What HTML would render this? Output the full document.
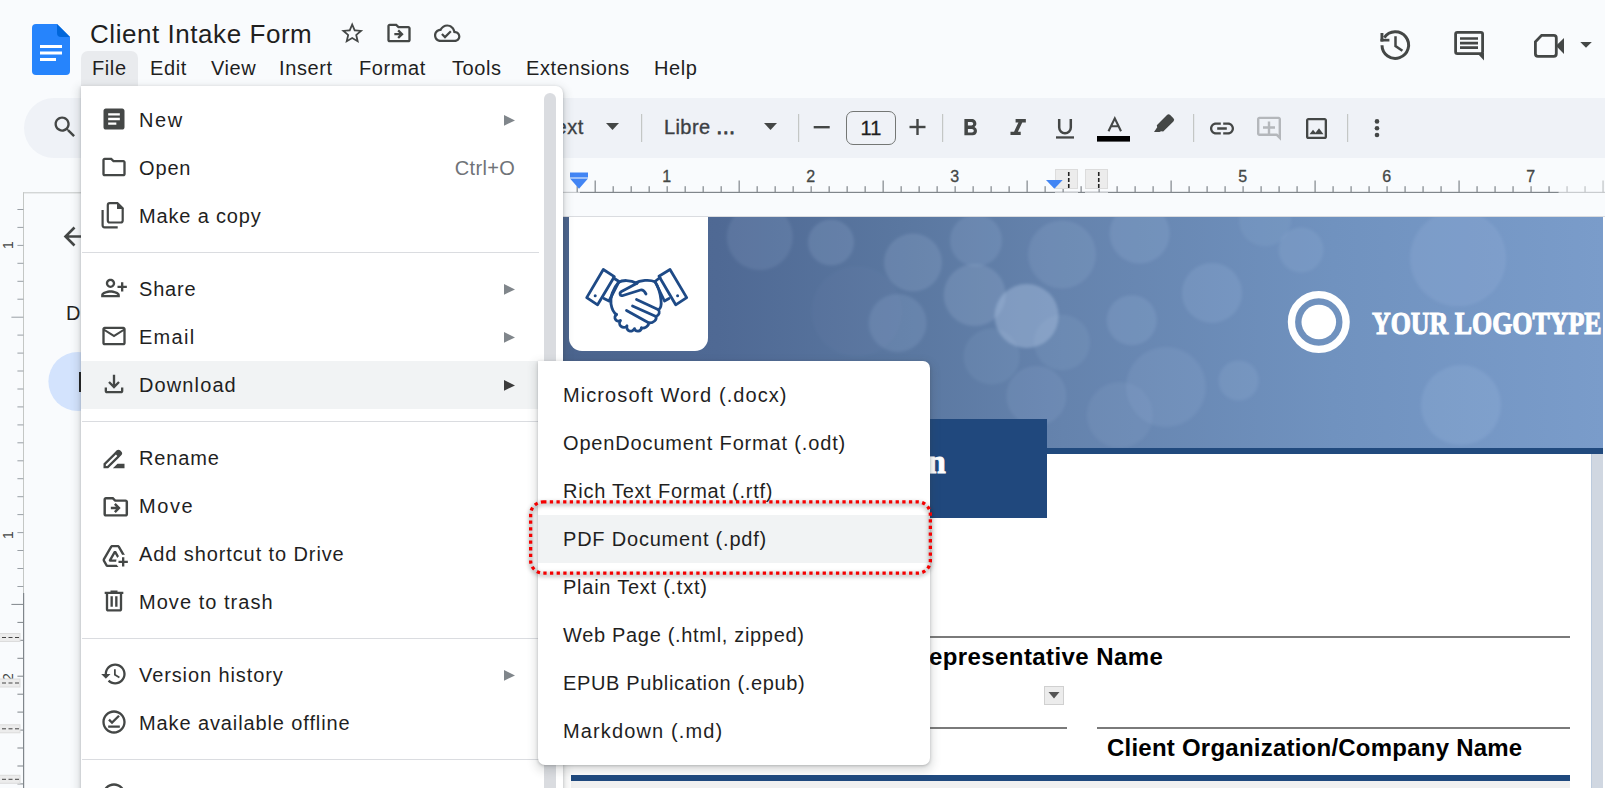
<!DOCTYPE html>
<html><head><meta charset="utf-8">
<style>
*{margin:0;padding:0;box-sizing:border-box}
html,body{width:1605px;height:788px;overflow:hidden;background:#f9fbfd;font-family:"Liberation Sans",sans-serif;color:#1f1f1f}
.a{position:absolute}
.t{position:absolute;white-space:nowrap;line-height:1}
svg{position:absolute;overflow:visible}
.ic{fill:#444746}
.mb{font-size:20px;letter-spacing:0.6px;color:#1f1f1f}
.sep{position:absolute;width:1px;background:#c7c7c7;top:114px;height:28px}
</style></head><body>

<!-- ===== HEADER ===== -->
<svg style="left:32px;top:24px" width="38" height="51" viewBox="0 0 38 51">
  <path d="M4 0H25L38 13V47Q38 51 34 51H4Q0 51 0 47V4Q0 0 4 0Z" fill="#2684fc"/>
  <path d="M25 0L38 13H29Q25 13 25 9Z" fill="#0066da"/>
  <rect x="8" y="21" width="22" height="3" fill="#fff"/>
  <rect x="8" y="27.5" width="22" height="3" fill="#fff"/>
  <rect x="8" y="34" width="16" height="3" fill="#fff"/>
</svg>
<div class="t" style="left:90px;top:21px;font-size:26px;letter-spacing:0.55px;color:#1f1f1f">Client Intake Form</div>
<svg style="left:338.8px;top:20.3px" width="26.4" height="26.4" viewBox="0 0 24 24"><path class="ic" d="M22 9.24l-7.19-.62L12 2 9.19 8.63 2 9.24l5.46 4.73L5.82 21 12 17.27 18.18 21l-1.63-7.03L22 9.24zM12 15.4l-3.76 2.27 1-4.28-3.32-2.88 4.38-.38L12 6.1l1.71 4.04 4.38.38-3.32 2.88 1 4.28L12 15.4z"/></svg>
<svg style="left:385px;top:19px" width="28" height="28" viewBox="0 0 24 24"><path class="ic" d="M20 6h-8l-2-2H4c-1.1 0-1.99.9-1.99 2L2 18c0 1.1.9 2 2 2h16c1.1 0 2-.9 2-2V8c0-1.1-.9-2-2-2zm0 12H4V6h5.17l2 2H20v10zm-7.84-6H8v2h4.16l-1.59 1.59L11.99 17 16 13.01 11.99 9l-1.41 1.41L12.16 12z"/></svg>
<svg style="left:434px;top:19.6px" width="26.4" height="26.4" viewBox="0 0 24 24"><path class="ic" d="M19.35 10.04C18.67 6.59 15.64 4 12 4 9.11 4 6.6 5.640 5.35 8.04 2.34 8.36 0 10.91 0 14c0 3.31 2.690 6 6 6h13c2.76 0 5-2.24 5-5 0-2.64-2.05-4.78-4.65-4.96zM19 18H6c-2.21 0-4-1.79-4-4 0-2.05 1.53-3.76 3.56-3.970l1.07-.11.5-.95C8.08 7.14 9.94 6 12 6c2.62 0 4.88 1.86 5.390 4.43l.3 1.5 1.53.11c1.56.1 2.78 1.41 2.78 2.96 0 1.65-1.35 3-3 3zm-9-3.82l-2.09-2.09L6.5 13.5 10 17l6.01-6.01-1.41-1.41z"/></svg>

<div class="a" style="left:81px;top:51px;width:57px;height:36px;background:#e9ebee;border-radius:7px 7px 0 0"></div>
<div class="t mb" style="left:92px;top:58px">File</div>
<div class="t mb" style="left:150px;top:58px">Edit</div>
<div class="t mb" style="left:211px;top:58px">View</div>
<div class="t mb" style="left:279px;top:58px">Insert</div>
<div class="t mb" style="left:359px;top:58px">Format</div>
<div class="t mb" style="left:452px;top:58px">Tools</div>
<div class="t mb" style="left:526px;top:58px">Extensions</div>
<div class="t mb" style="left:654px;top:58px">Help</div>

<svg style="left:0;top:0" width="1605" height="100">
 <g fill="none" stroke="#444746" stroke-width="3">
  <path d="M1384.3 37.6A13.3 13.3 0 1 1 1382 45.2"/>
  <path d="M1395.5 36.2V46L1402.4 50.8" stroke-width="2.5"/>
  <rect x="1455.6" y="32.3" width="27" height="21.3" rx="1.8" stroke-width="2.8"/>
  <path d="M1460 38.5H1478M1460 43.1H1478M1460 47.6H1478" stroke-width="2.6"/>
  <path d="M1541.6 35.4H1553.8Q1556.3 35.4 1556.3 37.9V53.8Q1556.3 56.3 1553.8 56.3H1537.9Q1535.4 56.3 1535.4 53.8V41.8Z" stroke-width="2.8"/>
 </g>
 <g fill="#444746">
  <rect x="1380.5" y="33" width="2.9" height="8.5"/><rect x="1380.5" y="38.8" width="8.9" height="2.7"/>
  <path d="M1477 53H1484V60.5Z"/>
  <path d="M1556 45.8L1564 38V53.9Z"/>
  <path d="M1580.3 42H1591.8L1586 47.8Z"/>
 </g>
</svg>

<!-- ===== TOOLBAR ===== -->
<div class="a" style="left:24px;top:98px;width:1620px;height:60px;background:#eff2f7;border-radius:30px"></div>
<div class="t" style="left:455px;top:117px;font-size:20px;letter-spacing:0.6px;color:#3c4043;-webkit-text-stroke:0.35px #3c4043;width:129px;text-align:right">Normal text</div>
<div class="t" style="left:664px;top:117px;font-size:20px;letter-spacing:0.4px;color:#3c4043;-webkit-text-stroke:0.35px #3c4043">Libre <span style="letter-spacing:0.9px;-webkit-text-stroke:0.9px #3c4043">...</span></div>
<div class="a" style="left:846px;top:110.5px;width:50px;height:34px;border:1.3px solid #747775;border-radius:7px"></div>
<div class="t" style="left:846px;top:117.5px;width:50px;text-align:center;font-size:20px;color:#1f1f1f;-webkit-text-stroke:0.3px #1f1f1f">11</div>
<svg style="left:0;top:95px" width="1605" height="65" viewBox="0 95 1605 65">
 <g fill="#444746">
  <path d="M606 123H619L612.5 130Z"/>
  <path d="M764 123H777L770.5 130Z"/>
  <rect x="641" y="114" width="1.2" height="28" fill="#c4c7c5"/>
  <rect x="798" y="114" width="1.2" height="28" fill="#c4c7c5"/>
  <rect x="942" y="114" width="1.2" height="28" fill="#c4c7c5"/>
  <rect x="1193" y="114" width="1.2" height="28" fill="#c4c7c5"/>
  <rect x="1347" y="114" width="1.2" height="28" fill="#c4c7c5"/>
  <rect x="813.7" y="126" width="16" height="2.4"/>
  <rect x="909.5" y="125.8" width="16" height="2.4"/>
  <rect x="916.3" y="119" width="2.4" height="16"/>
 </g>
 <g fill="#444746">
  <path transform="translate(956.2,114.3) scale(1.17)" d="M15.6 10.79c.97-.67 1.65-1.77 1.65-2.79 0-2.26-1.75-4-4-4H7v14h7.04c2.09 0 3.71-1.7 3.71-3.79 0-1.52-.86-2.82-2.1-3.42zM10 6.5h3c.83 0 1.5.67 1.5 1.5s-.67 1.5-1.5 1.5h-3v-3zm3.5 9H10v-3h3.5c.83 0 1.5.67 1.5 1.5s-.67 1.5-1.5 1.5z"/>
  <path transform="translate(1002.8,114.4) scale(1.28,1.15)" d="M10 4v3h2.21l-3.42 8H6v3h8v-3h-2.21l3.42-8H18V4z"/>
  <path d="M1059.2 119V127.5A5.8 5.8 0 0 0 1070.8 127.5V119" fill="none" stroke="#444746" stroke-width="2.5"/><rect x="1056" y="136.3" width="18" height="2.3"/>
  <path d="M1108.5 131.2L1114.8 118.3L1121 131.2M1110.9 126.3H1118.7" fill="none" stroke="#444746" stroke-width="2.1"/>
  <rect x="1097" y="136" width="33" height="5.6" fill="#000"/>
  <path d="M1154 132L1157.2 127.3 1156.8 125.2 1167 115Q1168.6 113.4 1170.2 115L1173.4 118.2Q1175 119.8 1173.4 121.4L1163.2 131.6 1161.1 131.2 1159.5 132Z"/>
  <path transform="translate(1207.6,114.1) scale(1.2)" d="M3.9 12c0-1.71 1.39-3.1 3.1-3.1h4V7H7c-2.76 0-5 2.24-5 5s2.24 5 5 5h4v-1.9H7c-1.71 0-3.1-1.39-3.1-3.1zM8 13h8v-2H8v2zm9-6h-4v1.9h4c1.71 0 3.1 1.39 3.1 3.1s-1.39 3.1-3.1 3.1h-4V17h4c2.76 0 5-2.24 5-5s-2.24-5-5-5z"/>
  <path transform="translate(1254.6,114.3) scale(1.2)" fill="#b4b7bb" d="M22 4c0-1.1-.9-2-2-2H4c-1.1 0-1.99.9-1.99 2L2 16c0 1.1.9 2 2 2h14l4 4V4zm-2 0v13.17L18.830 16H4V4h16zM13 6h-2v4H7v2h4v4h2v-4h4v-2h-4z"/>
  <path transform="translate(1302.5,114.5) scale(1.167)" d="M19 5v14H5V5h14m0-2H5c-1.1 0-2 .9-2 2v14c0 1.1.9 2 2 2h14c1.1 0 2-.9 2-2V5c0-1.1-.9-2-2-2zm-4.86 8.86l-3 3.87L9 13.14 6 17h12l-3.86-5.14z"/>
  <circle cx="1377" cy="121.4" r="2.3"/><circle cx="1377" cy="128.2" r="2.3"/><circle cx="1377" cy="135" r="2.3"/>
  <path transform="translate(51,113) scale(1.17)" d="M15.5 14h-.79l-.28-.27C15.41 12.59 16 11.11 16 9.5 16 5.910 13.09 3 9.5 3S3 5.91 3 9.5 5.91 16 9.5 16c1.61 0 3.09-.59 4.23-1.57l.27.28v.79l5 4.99L20.49 19l-4.99-5zm-6 0C7.01 14 5 11.99 5 9.5S7.010 5 9.5 5 14 7.01 14 9.5 11.99 14 9.5 14z"/>
 </g>
</svg>

<svg style="left:0;top:160px" width="1605" height="40" viewBox="0 160 1605 40">
<rect x="563" y="191.8" width="17" height="1.2" fill="#c9cccf"/><rect x="580" y="191.8" width="978.8" height="1.2" fill="#80868b"/>
<rect x="1055" y="191.8" width="23" height="1.2" fill="#c9cccf"/><rect x="1085" y="191.8" width="23" height="1.2" fill="#c9cccf"/>
<rect x="1558.8" y="191.8" width="50" height="1.2" fill="#c9cccf"/>
<rect x="576.59" y="186.2" width="1.2" height="6" fill="#80868b"/>
<rect x="594.59" y="180.5" width="1.2" height="12" fill="#80868b"/>
<rect x="612.59" y="186.2" width="1.2" height="6" fill="#80868b"/>
<rect x="630.59" y="186.2" width="1.2" height="6" fill="#80868b"/>
<rect x="648.58" y="186.2" width="1.2" height="6" fill="#80868b"/>
<rect x="666.58" y="186.2" width="1.2" height="6" fill="#80868b"/>
<rect x="684.58" y="186.2" width="1.2" height="6" fill="#80868b"/>
<rect x="702.58" y="186.2" width="1.2" height="6" fill="#80868b"/>
<rect x="720.57" y="186.2" width="1.2" height="6" fill="#80868b"/>
<rect x="738.57" y="180.5" width="1.2" height="12" fill="#80868b"/>
<rect x="756.57" y="186.2" width="1.2" height="6" fill="#80868b"/>
<rect x="774.56" y="186.2" width="1.2" height="6" fill="#80868b"/>
<rect x="792.56" y="186.2" width="1.2" height="6" fill="#80868b"/>
<rect x="810.56" y="186.2" width="1.2" height="6" fill="#80868b"/>
<rect x="828.56" y="186.2" width="1.2" height="6" fill="#80868b"/>
<rect x="846.55" y="186.2" width="1.2" height="6" fill="#80868b"/>
<rect x="864.55" y="186.2" width="1.2" height="6" fill="#80868b"/>
<rect x="882.55" y="180.5" width="1.2" height="12" fill="#80868b"/>
<rect x="900.55" y="186.2" width="1.2" height="6" fill="#80868b"/>
<rect x="918.54" y="186.2" width="1.2" height="6" fill="#80868b"/>
<rect x="936.54" y="186.2" width="1.2" height="6" fill="#80868b"/>
<rect x="954.54" y="186.2" width="1.2" height="6" fill="#80868b"/>
<rect x="972.54" y="186.2" width="1.2" height="6" fill="#80868b"/>
<rect x="990.53" y="186.2" width="1.2" height="6" fill="#80868b"/>
<rect x="1008.53" y="186.2" width="1.2" height="6" fill="#80868b"/>
<rect x="1026.53" y="180.5" width="1.2" height="12" fill="#80868b"/>
<rect x="1044.53" y="186.2" width="1.2" height="6" fill="#80868b"/>
<rect x="1062.53" y="186.2" width="1.2" height="6" fill="#80868b"/>
<rect x="1080.52" y="186.2" width="1.2" height="6" fill="#80868b"/>
<rect x="1098.52" y="186.2" width="1.2" height="6" fill="#80868b"/>
<rect x="1116.52" y="186.2" width="1.2" height="6" fill="#80868b"/>
<rect x="1134.52" y="186.2" width="1.2" height="6" fill="#80868b"/>
<rect x="1152.51" y="186.2" width="1.2" height="6" fill="#80868b"/>
<rect x="1170.51" y="180.5" width="1.2" height="12" fill="#80868b"/>
<rect x="1188.51" y="186.2" width="1.2" height="6" fill="#80868b"/>
<rect x="1206.51" y="186.2" width="1.2" height="6" fill="#80868b"/>
<rect x="1224.50" y="186.2" width="1.2" height="6" fill="#80868b"/>
<rect x="1242.50" y="186.2" width="1.2" height="6" fill="#80868b"/>
<rect x="1260.50" y="186.2" width="1.2" height="6" fill="#80868b"/>
<rect x="1278.50" y="186.2" width="1.2" height="6" fill="#80868b"/>
<rect x="1296.49" y="186.2" width="1.2" height="6" fill="#80868b"/>
<rect x="1314.49" y="180.5" width="1.2" height="12" fill="#80868b"/>
<rect x="1332.49" y="186.2" width="1.2" height="6" fill="#80868b"/>
<rect x="1350.49" y="186.2" width="1.2" height="6" fill="#80868b"/>
<rect x="1368.48" y="186.2" width="1.2" height="6" fill="#80868b"/>
<rect x="1386.48" y="186.2" width="1.2" height="6" fill="#80868b"/>
<rect x="1404.48" y="186.2" width="1.2" height="6" fill="#80868b"/>
<rect x="1422.47" y="186.2" width="1.2" height="6" fill="#80868b"/>
<rect x="1440.47" y="186.2" width="1.2" height="6" fill="#80868b"/>
<rect x="1458.47" y="180.5" width="1.2" height="12" fill="#80868b"/>
<rect x="1476.47" y="186.2" width="1.2" height="6" fill="#80868b"/>
<rect x="1494.47" y="186.2" width="1.2" height="6" fill="#80868b"/>
<rect x="1512.46" y="186.2" width="1.2" height="6" fill="#80868b"/>
<rect x="1530.46" y="186.2" width="1.2" height="6" fill="#80868b"/>
<rect x="1548.46" y="186.2" width="1.2" height="6" fill="#80868b"/>
<rect x="1566.46" y="186.2" width="1.2" height="6" fill="#c0c3c6"/>
<rect x="1584.45" y="186.2" width="1.2" height="6" fill="#c0c3c6"/>
<rect x="1602.45" y="180.5" width="1.2" height="12" fill="#c0c3c6"/>
<text x="666.78" y="182.2" text-anchor="middle" font-family="Liberation Sans" font-size="16" fill="#444746" stroke="#444746" stroke-width="0.3">1</text>
<text x="810.76" y="182.2" text-anchor="middle" font-family="Liberation Sans" font-size="16" fill="#444746" stroke="#444746" stroke-width="0.3">2</text>
<text x="954.74" y="182.2" text-anchor="middle" font-family="Liberation Sans" font-size="16" fill="#444746" stroke="#444746" stroke-width="0.3">3</text>
<text x="1242.70" y="182.2" text-anchor="middle" font-family="Liberation Sans" font-size="16" fill="#444746" stroke="#444746" stroke-width="0.3">5</text>
<text x="1386.68" y="182.2" text-anchor="middle" font-family="Liberation Sans" font-size="16" fill="#444746" stroke="#444746" stroke-width="0.3">6</text>
<text x="1530.66" y="182.2" text-anchor="middle" font-family="Liberation Sans" font-size="16" fill="#444746" stroke="#444746" stroke-width="0.3">7</text>
<rect x="570" y="172.5" width="18" height="5" fill="#4285f4"/><path d="M570 178.5H588L579 188.7Z" fill="#4285f4"/>
<rect x="1055.5" y="169.5" width="22" height="19" fill="#ececec" stroke="#dcdcdc" stroke-width="1"/>
<rect x="1085.5" y="169.5" width="22" height="19" fill="#ececec" stroke="#dcdcdc" stroke-width="1"/>
<path d="M1068.75 172V188M1098.75 172V188" stroke="#222" stroke-width="1.6" stroke-dasharray="4 2"/>
<path d="M1046 180H1062.7L1054.35 188.8Z" fill="#4285f4"/>
</svg>
<svg style="left:0;top:185px" width="90" height="603" viewBox="0 185 90 603">
<rect x="23" y="192.3" width="70" height="1" fill="#c4c7c5"/>
<rect x="23" y="192.3" width="1" height="401" fill="#c4c7c5"/>
<rect x="23" y="593" width="1.2" height="200" fill="#80868b"/>
<rect x="17.4" y="209.0" width="6" height="1" fill="#9aa0a6"/>
<rect x="17.4" y="226.9" width="6" height="1" fill="#9aa0a6"/>
<rect x="17.4" y="244.9" width="6" height="1" fill="#9aa0a6"/>
<rect x="17.4" y="262.8" width="6" height="1" fill="#9aa0a6"/>
<rect x="17.4" y="280.8" width="6" height="1" fill="#9aa0a6"/>
<rect x="17.4" y="298.7" width="6" height="1" fill="#9aa0a6"/>
<rect x="11.4" y="316.7" width="12" height="1" fill="#9aa0a6"/>
<rect x="17.4" y="334.6" width="6" height="1" fill="#9aa0a6"/>
<rect x="17.4" y="352.6" width="6" height="1" fill="#9aa0a6"/>
<rect x="17.4" y="370.5" width="6" height="1" fill="#9aa0a6"/>
<rect x="17.4" y="388.5" width="6" height="1" fill="#9aa0a6"/>
<rect x="17.4" y="406.4" width="6" height="1" fill="#9aa0a6"/>
<rect x="17.4" y="424.4" width="6" height="1" fill="#9aa0a6"/>
<rect x="17.4" y="442.3" width="6" height="1" fill="#9aa0a6"/>
<rect x="17.4" y="460.3" width="6" height="1" fill="#9aa0a6"/>
<rect x="17.4" y="478.2" width="6" height="1" fill="#9aa0a6"/>
<rect x="17.4" y="496.2" width="6" height="1" fill="#9aa0a6"/>
<rect x="17.4" y="514.1" width="6" height="1" fill="#9aa0a6"/>
<rect x="17.4" y="532.1" width="6" height="1" fill="#9aa0a6"/>
<rect x="17.4" y="550.0" width="6" height="1" fill="#9aa0a6"/>
<rect x="17.4" y="568.0" width="6" height="1" fill="#9aa0a6"/>
<rect x="17.4" y="586.0" width="6" height="1" fill="#9aa0a6"/>
<rect x="11.4" y="603.9" width="12" height="1" fill="#80868b"/>
<rect x="17.4" y="621.9" width="6" height="1" fill="#80868b"/>
<rect x="17.4" y="639.8" width="6" height="1" fill="#80868b"/>
<rect x="17.4" y="657.8" width="6" height="1" fill="#80868b"/>
<rect x="17.4" y="675.7" width="6" height="1" fill="#80868b"/>
<rect x="17.4" y="693.7" width="6" height="1" fill="#80868b"/>
<rect x="17.4" y="711.6" width="6" height="1" fill="#80868b"/>
<rect x="17.4" y="729.6" width="6" height="1" fill="#80868b"/>
<rect x="17.4" y="747.5" width="6" height="1" fill="#80868b"/>
<rect x="17.4" y="765.5" width="6" height="1" fill="#80868b"/>
<rect x="17.4" y="783.4" width="6" height="1" fill="#80868b"/>
<text transform="translate(13,245) rotate(-90)" text-anchor="middle" font-family="Liberation Sans" font-size="14" fill="#444746">1</text>
<text transform="translate(13,535) rotate(-90)" text-anchor="middle" font-family="Liberation Sans" font-size="14" fill="#444746">1</text>
<text transform="translate(13,677) rotate(-90)" text-anchor="middle" font-family="Liberation Sans" font-size="14" fill="#444746">2</text>
<rect x="-1" y="633.5" width="21" height="8" fill="#ececec" stroke="#dcdcdc"/><path d="M2 637.5H19" stroke="#444" stroke-width="1" stroke-dasharray="4 2.5"/>
<rect x="-1" y="679.0" width="21" height="8" fill="#ececec" stroke="#dcdcdc"/><path d="M2 683.0H19" stroke="#444" stroke-width="1" stroke-dasharray="4 2.5"/>
<rect x="-1" y="724.8" width="21" height="8" fill="#ececec" stroke="#dcdcdc"/><path d="M2 728.8H19" stroke="#444" stroke-width="1" stroke-dasharray="4 2.5"/>
<rect x="-1" y="775.3" width="21" height="8" fill="#ececec" stroke="#dcdcdc"/><path d="M2 779.3H19" stroke="#444" stroke-width="1" stroke-dasharray="4 2.5"/>
<path d="M82 236.5H66M74.5 227.5L65.5 236.5L74.5 245.5" fill="none" stroke="#444746" stroke-width="2.6"/>
<circle cx="78" cy="381.5" r="29.6" fill="#d3e3fd"/>
<rect x="79" y="372" width="2.4" height="20" fill="#1f1f1f"/>
</svg>
<div class="t" style="left:66px;top:303px;font-size:20px;color:#1f1f1f">D</div>
<!-- ===== PAGE ===== -->
<div class="a" style="left:523px;top:216px;width:1082px;height:572px;background:#fff;border-top:1px solid #dadce0"></div>
<div class="a" style="left:523px;top:216.5px;width:1080px;height:232px;background:linear-gradient(90deg,#4a638c 0%,#4f6994 18%,#5a77a0 35%,#6583ad 50%,#7092bf 75%,#7a9cca 100%);overflow:hidden">
<svg style="left:0;top:0" width="1080" height="232"><defs><filter id="blur1"><feGaussianBlur stdDeviation="1.6"/></filter></defs><g filter="url(#blur1)"><circle cx="236.8" cy="20.1" r="33" fill="#c0d6f4" fill-opacity="0.1"/><circle cx="308.0" cy="25.4" r="23" fill="#c0d6f4" fill-opacity="0.13"/><circle cx="390.0" cy="45.5" r="29" fill="#c0d6f4" fill-opacity="0.14"/><circle cx="453.0" cy="23.5" r="26" fill="#c0d6f4" fill-opacity="0.12"/><circle cx="374.6" cy="106.0" r="29" fill="#c0d6f4" fill-opacity="0.12"/><circle cx="451.7" cy="78.0" r="31" fill="#c0d6f4" fill-opacity="0.15"/><circle cx="503.6" cy="99.0" r="32" fill="#c0d6f4" fill-opacity="0.32"/><circle cx="539.0" cy="37.5" r="34" fill="#c0d6f4" fill-opacity="0.1"/><circle cx="539.0" cy="125.5" r="28" fill="#c0d6f4" fill-opacity="0.08"/><circle cx="334.0" cy="94.5" r="45" fill="#c0d6f4" fill-opacity="0.025"/><circle cx="468.6" cy="139.5" r="28" fill="#c0d6f4" fill-opacity="0.08"/><circle cx="513.4" cy="178.9" r="30" fill="#c0d6f4" fill-opacity="0.09"/><circle cx="608.7" cy="103.2" r="25" fill="#c0d6f4" fill-opacity="0.12"/><circle cx="616.6" cy="16.5" r="30" fill="#c0d6f4" fill-opacity="0.12"/><circle cx="689.0" cy="75.9" r="30" fill="#c0d6f4" fill-opacity="0.12"/><circle cx="643.0" cy="170.0" r="40" fill="#c0d6f4" fill-opacity="0.09"/><circle cx="715.6" cy="163.5" r="20" fill="#c0d6f4" fill-opacity="0.1"/><circle cx="778.0" cy="33.0" r="22.4" fill="#c0d6f4" fill-opacity="0.1"/><circle cx="935.0" cy="41.3" r="48" fill="#c0d6f4" fill-opacity="0.11"/><circle cx="938.0" cy="188.1" r="40" fill="#c0d6f4" fill-opacity="0.12"/><circle cx="742.0" cy="3.3" r="26" fill="#c0d6f4" fill-opacity="0.08"/><circle cx="596.8" cy="198.0" r="33" fill="#c0d6f4" fill-opacity="0.07"/></g></svg>
</div>
<div class="a" style="left:523px;top:448px;width:1080px;height:6px;background:#214a7e"></div>
<div class="a" style="left:568.6px;top:216.5px;width:139px;height:134px;background:#fff;border-radius:0 0 13px 13px"></div>
<svg style="left:580px;top:260px" width="115" height="75" viewBox="0 0 115 75"><g fill="none" stroke="#1e4a86" stroke-width="2.8" stroke-linejoin="round" stroke-linecap="round">
<path d="M6.7 37.6L23.3 9.5L34.3 16.7L17.6 44.8Z"/>
<path d="M90 9.5L106.7 37.6L95.7 44.8L79 16.2Z"/>
<path d="M33.5 18L39 21.5M24 38.5L29 41M39 21.5L29 41"/>
<path d="M80 17.5L75 21.5M89 38.5L84.5 41M75 21.5L84.5 41"/>
<path d="M38.5 22.4C42 20 50 19.5 57 23.3"/>
<path d="M55 23.5C60 20 70 19.5 75 21.8"/>
<path d="M38.5 22.4C33 28 30 38 31 44C32 50 34 53 36.5 54.5"/>
<path d="M36.5 54.5A3.2 3.2 0 0 0 40.5 60.5A3.4 3.4 0 0 0 47 65.8A3.4 3.4 0 0 0 54.5 68.6A3.6 3.6 0 0 0 61.5 68"/>
<path d="M75 21.8C78 26 80 32 81 40C81.5 44 81.2 48 78.5 49.8C80 52 79.5 55 76 56.5C77 59.5 74 63 69 63C68.5 66 65 68.5 61.5 68"/>
<path d="M57 23.3L41.5 31.5C39 33 40 36.5 43 35.5L60.5 30C63 29.5 65 32 66 34"/>
<path d="M56.5 39.5L78.5 49.8M52.5 46L76 56.5M46.5 50.5L69 63"/>
</g><circle cx="15.2" cy="35.7" r="1.5" fill="#1e4a86"/><circle cx="97.6" cy="35.7" r="1.5" fill="#1e4a86"/></svg>
<svg style="left:1280px;top:280px" width="325" height="80" viewBox="1280 280 325 80">
<circle cx="1318.8" cy="322" r="27.35" fill="none" stroke="#fff" stroke-width="7.3"/>
<circle cx="1318.8" cy="322" r="17.3" fill="#fff"/>
<text x="1372" y="333.7" textLength="229.6" lengthAdjust="spacingAndGlyphs" font-family="Liberation Serif" font-weight="700" font-size="31" fill="#fff" stroke="#fff" stroke-width="1.1">YOUR LOGOTYPE</text>
</svg>
<div class="a" style="left:523px;top:419px;width:524px;height:98.7px;background:#20487d"></div>
<div class="t" style="left:927.5px;top:446px;font-family:'Liberation Serif',serif;font-weight:700;font-size:33px;color:#fff;-webkit-text-stroke:0.8px #fff">n</div>
<div class="a" style="left:571px;top:636px;width:998.5px;height:2px;background:#7a7a7a"></div>
<div class="t" style="left:929px;top:644.7px;font-size:24px;font-weight:700;color:#000;letter-spacing:0.41px">epresentative Name</div>
<div class="a" style="left:1044px;top:686.4px;width:19.7px;height:19px;background:#ececec;border:1px solid #d0d0d0"></div>
<svg style="left:1047px;top:692px" width="14" height="8"><path d="M1.5 0H12.5L7 6.5Z" fill="#555"/></svg>
<div class="a" style="left:571px;top:727px;width:495.6px;height:2px;background:#7a7a7a"></div>
<div class="a" style="left:1097px;top:727px;width:472.5px;height:2px;background:#7a7a7a"></div>
<div class="t" style="left:1107px;top:736px;font-size:24px;font-weight:700;color:#000;letter-spacing:0.23px">Client Organization/Company Name</div>
<div class="a" style="left:571px;top:775.4px;width:998.5px;height:5.3px;background:#1f497e"></div>
<div class="a" style="left:571px;top:780.7px;width:998.5px;height:10px;background:#f0f0f0"></div>
<div class="a" style="left:1591px;top:454px;width:11.5px;height:340px;background:#d0d7e1;border-left:1.5px solid #bccbdd"></div>


<!-- ===== MAIN MENU ===== -->
<div class="a" style="left:81px;top:85.6px;width:482px;height:720px;background:#fff;border-radius:0 7px 0 0;box-shadow:0 1px 3px 0 rgba(60,64,67,.3),0 4px 8px 3px rgba(60,64,67,.15)">
 <div class="a" style="left:463px;top:7.4px;width:12px;height:720px;border-radius:6px;background:#dadce0"></div>
 <div class="a" style="left:0;top:275.4px;width:463px;height:48px;background:#f1f3f4"></div>
 <div class="a" style="left:1px;top:166.4px;width:457px;height:1px;background:#dadce0"></div>
 <div class="a" style="left:1px;top:335.4px;width:457px;height:1px;background:#dadce0"></div>
 <div class="a" style="left:1px;top:552.4px;width:457px;height:1px;background:#dadce0"></div>
 <div class="a" style="left:1px;top:673px;width:457px;height:1px;background:#dadce0"></div>
</div>
<div class="t" style="left:139px;top:110.07px;font-size:20px;letter-spacing:1.600px;color:#1f1f1f">New</div>
<svg style="left:504px;top:114.5px" width="11" height="11"><path d="M0 0L11 5.4L0 10.8Z" fill="#80868b"/></svg>
<div class="t" style="left:139px;top:158.07px;font-size:20px;letter-spacing:0.85px;color:#1f1f1f">Open</div>
<div class="t" style="right:1090px;top:158.07px;font-size:20px;letter-spacing:0.3px;color:#6f7378">Ctrl+O</div>
<div class="t" style="left:139px;top:206.07px;font-size:20px;letter-spacing:0.840px;color:#1f1f1f">Make a copy</div>
<div class="t" style="left:139px;top:279.07px;font-size:20px;letter-spacing:0.800px;color:#1f1f1f">Share</div>
<svg style="left:504px;top:283.5px" width="11" height="11"><path d="M0 0L11 5.4L0 10.8Z" fill="#80868b"/></svg>
<div class="t" style="left:139px;top:327.07px;font-size:20px;letter-spacing:1.275px;color:#1f1f1f">Email</div>
<svg style="left:504px;top:331.5px" width="11" height="11"><path d="M0 0L11 5.4L0 10.8Z" fill="#80868b"/></svg>
<div class="t" style="left:139px;top:375.07px;font-size:20px;letter-spacing:1.114px;color:#1f1f1f">Download</div>
<svg style="left:504px;top:379.5px" width="11" height="11"><path d="M0 0L11 5.4L0 10.8Z" fill="#3c3c3c"/></svg>
<div class="t" style="left:139px;top:448.07px;font-size:20px;letter-spacing:0.840px;color:#1f1f1f">Rename</div>
<div class="t" style="left:139px;top:496.07px;font-size:20px;letter-spacing:1.567px;color:#1f1f1f">Move</div>
<div class="t" style="left:139px;top:544.07px;font-size:20px;letter-spacing:0.900px;color:#1f1f1f">Add shortcut to Drive</div>
<div class="t" style="left:139px;top:592.07px;font-size:20px;letter-spacing:1.033px;color:#1f1f1f">Move to trash</div>
<div class="t" style="left:139px;top:665.07px;font-size:20px;letter-spacing:0.900px;color:#1f1f1f">Version history</div>
<svg style="left:504px;top:669.5px" width="11" height="11"><path d="M0 0L11 5.4L0 10.8Z" fill="#80868b"/></svg>
<div class="t" style="left:139px;top:713.07px;font-size:20px;letter-spacing:0.890px;color:#1f1f1f">Make available offline</div>
<div class="t" style="left:139px;top:786.07px;font-size:20px;letter-spacing:0.7px;color:#1f1f1f">Details</div>
<svg style="left:100.2px;top:105.3px" width="28" height="28" viewBox="0 0 24 24"><g fill="#444746"><path d="M19 3H5c-1.1 0-2 .9-2 2v14c0 1.1.9 2 2 2h14c1.1 0 2-.9 2-2V5c0-1.1-.9-2-2-2zm-5 14H7v-2h7v2zm3-4H7v-2h10v2zm0-4H7V7h10v2z"/></g></svg>
<svg style="left:100.2px;top:153.3px" width="28" height="28" viewBox="0 0 24 24"><g fill="#444746"><path d="M9.17 6l2 2H20v10H4V6h5.17M10 4H4c-1.1 0-1.99.9-1.99 2L2 18c0 1.1.9 2 2 2h16c1.1 0 2-.9 2-2V8c0-1.1-.9-2-2-2h-8l-2-2z"/></g></svg>
<svg style="left:95px;top:195px" width="40" height="40" viewBox="95 195 40 40"><g fill="none" stroke="#444746" stroke-width="2.2" stroke-linejoin="round">
<path d="M109.8 203.2H117.6L122.7 208.3V220.5Q122.7 222.5 120.7 222.5H109.8Q107.8 222.5 107.8 220.5V205.2Q107.8 203.2 109.8 203.2Z"/>
<path d="M102.6 209.9V225.3Q102.6 227.3 104.6 227.3H117.7"/></g>
<path d="M117 202.1L123.8 208.9H117Z" fill="#444746"/></svg>
<svg style="left:100.2px;top:274.3px" width="28" height="28" viewBox="0 0 24 24"><g fill="#444746"><path d="M15 12c2.21 0 4-1.79 4-4s-1.79-4-4-4-4 1.79-4 4 1.79 4 4 4zm0-6c1.1 0 2 .9 2 2s-.9 2-2 2-2-.9-2-2 .9-2 2-2zm0 8c-2.67 0-8 1.34-8 4v2h16v-2c0-2.66-5.33-4-8-4zm-6 4c.22-.72 3.31-2 6-2 2.7 0 5.8 1.29 6 2H9zm-3-3v-3h3v-2H6V7H4v3H1v2h3v3z" transform="translate(24,0) scale(-1,1)"/></g></svg>
<svg style="left:100.2px;top:322.3px" width="28" height="28" viewBox="0 0 24 24"><g fill="#444746"><path d="M22 6c0-1.1-.9-2-2-2H4c-1.1 0-2 .9-2 2v12c0 1.1.9 2 2 2h16c1.1 0 2-.9 2-2V6zm-2 0l-8 5-8-5h16zm0 12H4V8l8 5 8-5v10z"/></g></svg>
<svg style="left:100.2px;top:370.3px" width="28" height="28" viewBox="0 0 24 24"><g fill="#444746"><path d="M18 15v3H6v-3H4v3c0 1.1.9 2 2 2h12c1.1 0 2-.9 2-2v-3h-2zm-1-4l-1.41-1.41L13 12.17V4h-2v8.17L8.41 9.59 7 11l5 5 5-5z"/></g></svg>
<svg style="left:100.2px;top:444.5px" width="28" height="28" viewBox="0 0 24 24"><g fill="#444746"><path d="M18.41 5.8L17.2 4.59c-.78-.78-2.05-.78-2.83 0l-2.68 2.68L3 15.96V20h4.04l8.74-8.74 2.63-2.63c.79-.78.79-2.05 0-2.83zM6.21 18H5v-1.21l8.66-8.66 1.21 1.21L6.21 18zM11 20l4-4h6v4H11z"/></g></svg>
<svg style="left:100.5px;top:492px" width="29.5" height="29.5" viewBox="0 0 24 24"><g fill="#444746"><path d="M20 6h-8l-2-2H4c-1.1 0-1.99.9-1.99 2L2 18c0 1.1.9 2 2 2h16c1.1 0 2-.9 2-2V8c0-1.1-.9-2-2-2zm0 12H4V6h5.17l2 2H20v10zm-7.84-6H8v2h4.16l-1.59 1.59L11.99 17 16 13.01 11.99 9l-1.41 1.41L12.16 12z"/></g></svg>
<svg style="left:100.6px;top:541.5px" width="28" height="28" viewBox="0 0 24 24"><g fill="#444746"><path d="M20 21v-3h3v-2h-3v-3h-2v3h-3v2h3v3h2zM15.03 21.5H5.66c-.72 0-1.38-.38-1.73-1L1.57 16.4c-.36-.62-.35-1.38.01-2L7.92 3.49C8.28 2.88 8.94 2.5 9.65 2.5h4.7c.71 0 1.37.38 1.73.99l4.48 7.71C20.06 11.07 19.54 11 19 11c-.28 0-.56.02-.84.06L14.35 4.5h-4.7L3.31 15.41l2.35 4.09h7.89C13.9 20.27 14.4 20.95 15.03 21.5zM13.34 15C13.12 15.63 13 16.3 13 17H7.25l-.73-1.27 4.58-7.980h1.8l2.53 4.42c-.56.42-1.05.93-1.44 1.51l-2-3.49L9.25 15H13.34z"/></g></svg>
<svg style="left:100.2px;top:587.3px" width="28" height="28" viewBox="0 0 24 24"><g fill="#444746"><path d="M15 4V3H9v1H4v2h1v13c0 1.1.9 2 2 2h10c1.1 0 2-.9 2-2V6h1V4h-5zm2 15H7V6h10v13zM9 8h2v9H9zm4 0h2v9h-2z"/></g></svg>
<svg style="left:100.2px;top:660.3px" width="28" height="28" viewBox="0 0 24 24"><g fill="#444746"><path d="M13 3c-4.97 0-9 4.03-9 9H1l3.89 3.89.07.14L9 12H6c0-3.87 3.13-7 7-7s7 3.13 7 7-3.13 7-7 7c-1.93 0-3.68-.79-4.94-2.06l-1.42 1.42C8.27 19.99 10.51 21 13 21c4.97 0 9-4.03 9-9s-4.03-9-9-9zm-1 5v5l4.28 2.54.72-1.21-3.5-2.080V8H12z"/></g></svg>
<svg style="left:100.2px;top:708.3px" width="28" height="28" viewBox="0 0 24 24"><g fill="#444746"><path d="M12 2C6.5 2 2 6.5 2 12s4.5 10 10 10 10-4.5 10-10S17.5 2 12 2zm0 18c-4.41 0-8-3.59-8-8s3.59-8 8-8 8 3.59 8 8-3.59 8-8 8zm-5-5h10v2H7zm3.3-3.8L8.4 9.3 7 10.7l3.3 3.3L17 7.3l-1.4-1.4z"/></g></svg>
<svg style="left:100.2px;top:781.3px" width="28" height="28" viewBox="0 0 24 24"><g fill="#444746"><path d="M12 2C6.48 2 2 6.48 2 12s4.48 10 10 10 10-4.48 10-10S17.52 2 12 2zm0 18c-4.41 0-8-3.59-8-8s3.59-8 8-8 8 3.59 8 8-3.59 8-8 8z"/></g></svg>


<!-- ===== SUBMENU ===== -->
<div class="a" style="left:538px;top:361.2px;width:392px;height:403.6px;background:#fff;border-radius:0 7px 7px 7px;box-shadow:0 1px 3px 0 rgba(60,64,67,.3),0 4px 8px 3px rgba(60,64,67,.15)">
 <div class="a" style="left:0;top:153.8px;width:392px;height:48px;background:#f1f3f4"></div>
</div>
<div class="t" style="left:563px;top:385.07px;font-size:20px;letter-spacing:1.083px;color:#1f1f1f">Microsoft Word (.docx)</div>
<div class="t" style="left:563px;top:433.07px;font-size:20px;letter-spacing:0.842px;color:#1f1f1f">OpenDocument Format (.odt)</div>
<div class="t" style="left:563px;top:481.07px;font-size:20px;letter-spacing:0.750px;color:#1f1f1f">Rich Text Format (.rtf)</div>
<div class="t" style="left:563px;top:529.07px;font-size:20px;letter-spacing:0.794px;color:#1f1f1f">PDF Document (.pdf)</div>
<div class="t" style="left:563px;top:577.07px;font-size:20px;letter-spacing:0.750px;color:#1f1f1f">Plain Text (.txt)</div>
<div class="t" style="left:563px;top:625.07px;font-size:20px;letter-spacing:0.680px;color:#1f1f1f">Web Page (.html, zipped)</div>
<div class="t" style="left:563px;top:673.07px;font-size:20px;letter-spacing:0.650px;color:#1f1f1f">EPUB Publication (.epub)</div>
<div class="t" style="left:563px;top:721.07px;font-size:20px;letter-spacing:1.135px;color:#1f1f1f">Markdown (.md)</div>
<svg style="left:520px;top:490px" width="425" height="100" viewBox="520 490 425 100">
<defs><filter id="rsh" x="-10%" y="-30%" width="120%" height="160%"><feGaussianBlur stdDeviation="2.2"/></filter></defs>
<rect x="530.65" y="502.35" width="399.7" height="71.3" rx="12.5" fill="none" stroke="#000" stroke-opacity="0.28" stroke-width="3.3" filter="url(#rsh)" transform="translate(0,1.2)"/>
<rect x="530.65" y="501.85" width="399.7" height="71.3" rx="12.5" fill="none" stroke="#f40000" stroke-width="3.3" stroke-dasharray="3.3 3.35"/>
</svg>


</body></html>
